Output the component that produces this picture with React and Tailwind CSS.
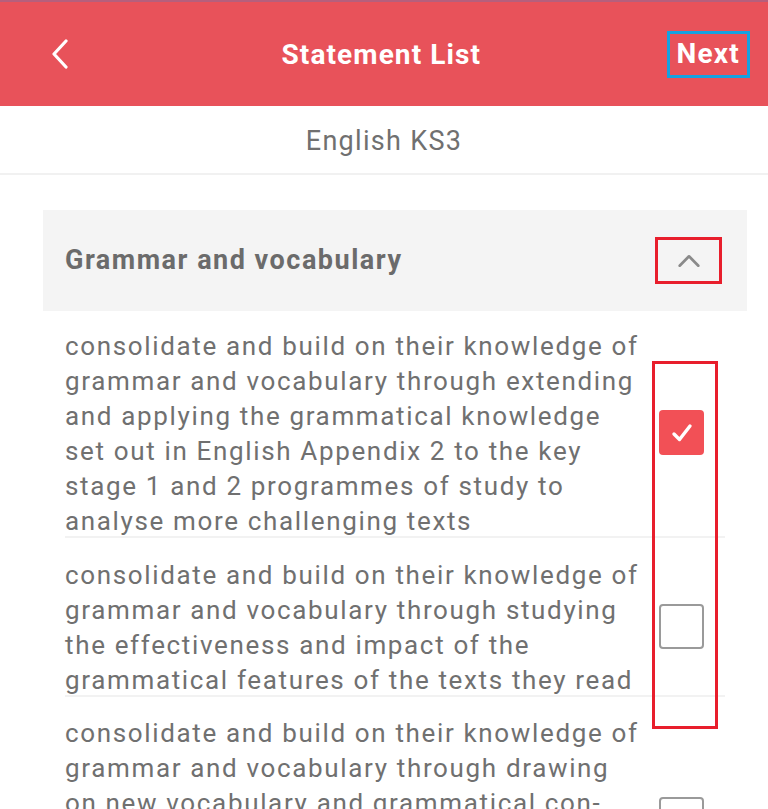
import React, { useState } from "react";

const statements = [
	"consolidate and build on their knowledge of grammar and vocabulary through extending and applying the grammatical knowledge set out in English Appendix 2 to the key stage 1 and 2 programmes of study to analyse more challenging texts",
	"consolidate and build on their knowledge of grammar and vocabulary through studying the effectiveness and impact of the grammatical features of the texts they read",
	"consolidate and build on their knowledge of grammar and vocabulary through drawing on new vocabulary and grammatical con-structions from their reading and listening, and using these consciously in their writing and speech to achieve particular effects",
];

function App() {
	const [checked, setChecked] = useState([true, false, false]);

	const toggle = (i) => {
		setChecked(checked.map((c, idx) => (idx === i ? !c : c)));
	};

	return (
		<div className="h-[809px] w-[768px] overflow-hidden bg-white font-['Roboto',sans-serif]">
			{/* Header */}
			<div className="flex h-[106px] items-center justify-between border-t-2 border-[#b65f7c] bg-[#e8525a] pl-[50px] pr-[18px]">
				<button className="flex h-[40px] w-[30px] items-center">
					<svg viewBox="0 0 20 30" className="h-[30px] w-[20px]" fill="none" stroke="white" strokeWidth="3.2" strokeLinecap="round" strokeLinejoin="round">
						<path d="M16 2 L4 15 L16 28" />
					</svg>
				</button>
				<h1 className="ml-[16px] mt-[2px] text-[28px] font-bold tracking-[1.1px] text-white">Statement List</h1>
				<button className="border-[3px] border-[#15a1e1] px-[7px] pb-[3px] pt-[2px] text-[28px] font-bold leading-[36px] tracking-[1.2px] text-white">
					Next
				</button>
			</div>

			{/* Subject */}
			<div className="flex h-[69px] items-center justify-center border-b-2 border-[#f1f1f1] pt-[3px] text-[27px] tracking-[1.3px] text-[#707070]">
				English KS3
			</div>

			{/* Section */}
			<div className="ml-[43px] mr-[21px] mt-[35px]">
				<div className="flex h-[101px] items-center justify-between bg-[#f4f4f4] pl-[22px] pr-[25px]">
					<span className="text-[27px] font-bold tracking-[1.5px] text-[#6b6b6b]">Grammar and vocabulary</span>
					<div className="flex h-[47px] w-[67px] items-center justify-center border-[3px] border-[#e81e2c]">
						<svg viewBox="0 0 30 18" className="h-[14px] w-[28px]" fill="none" stroke="#8a8a8a" strokeWidth="3.5" strokeLinecap="round" strokeLinejoin="round">
							<path d="M3 15 L15 3 L27 15" />
						</svg>
					</div>
				</div>

				<div className="relative pl-[22px] pr-[22px]">
					{statements.map((s, i) => (
						<div
							key={i}
							className={`flex items-center ${i === 0 ? "pt-[18px]" : i === 1 ? "pt-[20px]" : "pt-[19px]"} ${i < statements.length - 1 ? "border-b-2 border-[#f2f2f2]" : ""}`}
						>
							<p className="-mb-[3px] w-[582px] shrink-0 text-[26px] leading-[35px] tracking-[1.65px] text-[#707070]">{s}</p>
							<div className="flex flex-1 pl-[12px]">
								<button
									onClick={() => toggle(i)}
									className={`flex h-[45px] w-[45px] items-center justify-center rounded-[4px] ${checked[i] ? "bg-[#f25056]" : "border-2 border-[#9a9a9a] bg-white"}`}
								>
									{checked[i] && (
										<svg viewBox="0 0 24 24" className="h-[24px] w-[24px]" fill="none" stroke="white" strokeWidth="3.4" strokeLinecap="round" strokeLinejoin="round">
											<path d="M4 13 L9.5 18.5 L20 5" />
										</svg>
									)}
								</button>
							</div>
						</div>
					))}
					{/* highlight outline */}
					<div className="pointer-events-none absolute left-[609px] top-[50px] h-[368px] w-[66px] border-[3px] border-[#e81e2c]" />
				</div>
			</div>
		</div>
	);
}

export default App;
